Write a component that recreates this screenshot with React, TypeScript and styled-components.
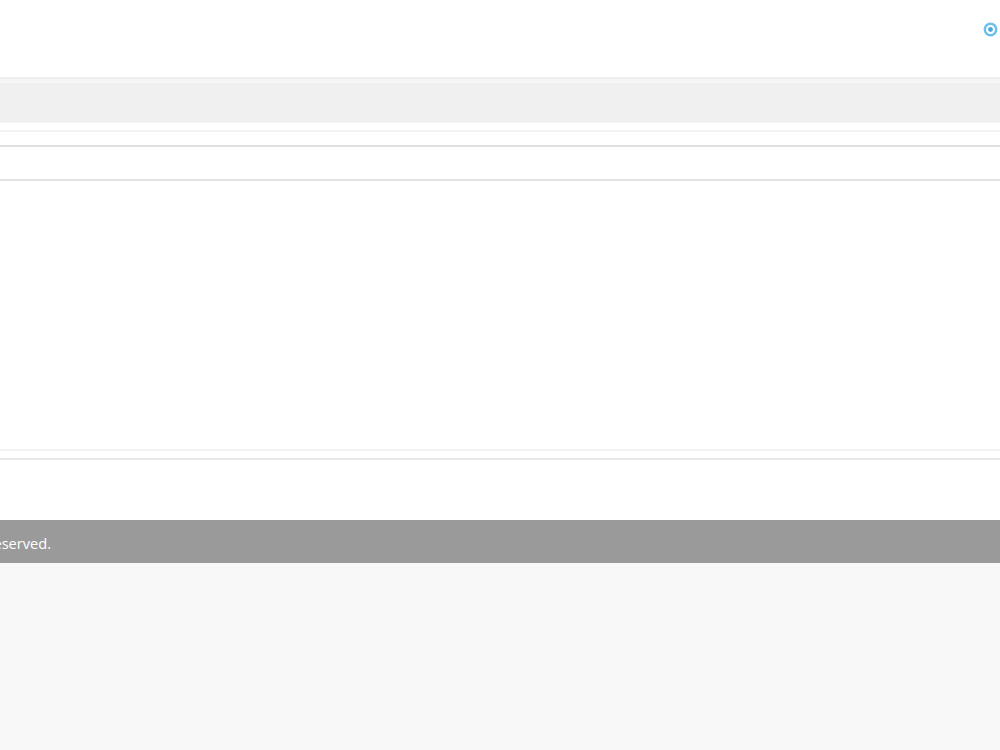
import React from "react";
import styled, { createGlobalStyle } from "styled-components";

const Global = createGlobalStyle`
  html, body { margin: 0; padding: 0; background: #f7f7f7; overflow: hidden; }
  body { font-family: "Open Sans", "Liberation Sans", sans-serif; }
`;
const Page = styled.div`
  width: 1000px; height: 750px; display: flex; flex-direction: column; background: #f8f8f8; overflow: hidden;
`;
const Header = styled.header`
  height: 77px; background: #fff; display: flex; justify-content: flex-end; align-items: flex-start;
  padding: 22px 2px 0 0; box-sizing: border-box;
`;
const HeaderShade = styled.div`
  height: 6px; box-sizing: border-box; background: #f5f5f5;
  border-top: 2px solid #eeeeee; border-bottom: 1px solid #f8f8f8;
`;
const Toolbar = styled.div`
  height: 40px; box-sizing: border-box; background: #f0f0f0; border-bottom: 1px solid #f4f4f4;
`;
const Main = styled.main`
  height: 397px; background: #fff; display: flex; flex-direction: column;
`;
const Rule = styled.div<{ $top: number; $color: string }>`
  margin-top: ${p => p.$top}px; height: 2px; background: ${p => p.$color}; flex: none;
`;
const Footer = styled.footer`
  height: 43px; background: #9a9a9a; display: flex; align-items: center;
`;
const FooterText = styled.div`
  width: 51px; display: flex; justify-content: flex-end; white-space: nowrap;
  color: #fff; font-size: 14.6px; font-weight: 500; line-height: 20px; padding-top: 2px;
`;

export default function App() {
  return (
    <Page>
      <Global />
      <Header>
        <svg width="15" height="15" viewBox="0 0 15 15" aria-hidden="true">
          <circle cx="7.5" cy="7.5" r="5.7" fill="none" stroke="#6cc0ec" strokeWidth="2.4" />
          <circle cx="7.5" cy="7.5" r="2.4" fill="#4aa8de" />
        </svg>
      </Header>
      <HeaderShade />
      <Toolbar />
      <Main>
        <Rule $top={7} $color="#f2f2f2" />
        <Rule $top={13} $color="#e0e0e0" />
        <Rule $top={32} $color="#e2e2e2" />
        <Rule $top={268} $color="#f2f2f2" />
        <Rule $top={7} $color="#e8e8e8" />
      </Main>
      <Footer>
        <FooterText>Copyright © All rights reserved.</FooterText>
      </Footer>
    </Page>
  );
}
